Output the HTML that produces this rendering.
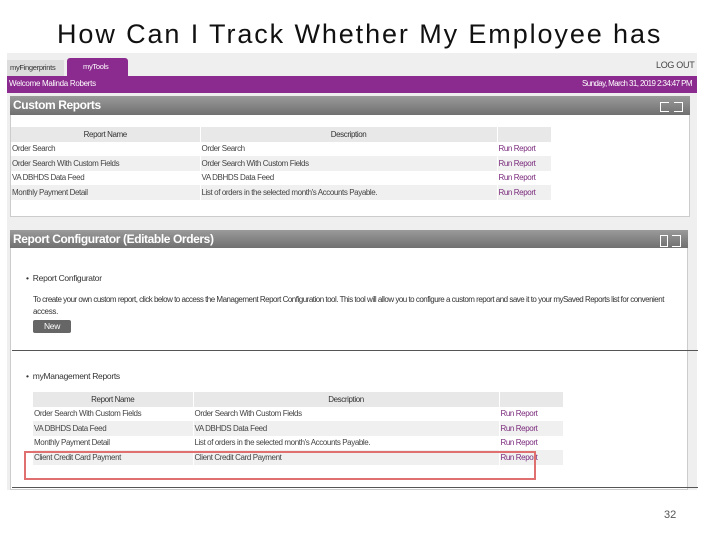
<!DOCTYPE html>
<html><head><style>
*{margin:0;padding:0;box-sizing:border-box}
body{width:720px;height:540px;background:#fff;position:relative;overflow:hidden;font-family:"Liberation Sans",sans-serif}
.a{position:absolute}
.t{font-family:"Liberation Sans Narrow","Liberation Sans",sans-serif;font-size:8.5px;color:#333;white-space:nowrap;letter-spacing:-0.3px}
table{border-collapse:collapse;position:absolute}
td{font-family:"Liberation Sans",sans-serif;font-size:8px;color:#444;height:14.5px;padding:0 1px;white-space:nowrap;letter-spacing:-0.4px;border-right:1px solid #fff}
tr.h td{background:#e8e8e8;text-align:center;color:#333}
tr.g td{background:#f0f0f0}
td.r{color:#7a2a7c}
.hd{background:linear-gradient(#9a9a9a,#707070);color:#fff;font-weight:bold;font-size:12px;padding-left:3px;letter-spacing:-0.4px}
</style></head><body>
<div class="a" style="left:57px;top:19px;font-size:27px;color:#111;white-space:nowrap;font-family:'Liberation Sans',sans-serif;letter-spacing:1.9px">How Can I Track Whether My Employee has</div>
<div class="a" style="left:7px;top:53px;width:690px;height:437px;background:#efefef"></div>
<div class="a t" style="left:7px;top:60px;width:57px;height:16px;background:#ddd;font-size:7.5px;padding:3px 0 0 3px">myFingerprints</div>
<div class="a t" style="left:67px;top:58px;width:61px;height:18px;background:#8b2a8f;color:#fff;font-size:7.5px;padding:4px 0 0 16px;border-radius:3px 3px 0 0">myTools</div>
<div class="a t" style="left:656px;top:60px;font-size:9px;color:#444">LOG OUT</div>
<div class="a" style="left:7px;top:76px;width:690px;height:17px;background:#8b2a8f"></div>
<div class="a t" style="left:9px;top:79px;color:#fff;font-size:8px">Welcome Malinda Roberts</div>
<div class="a t" style="left:582px;top:79px;color:#fff;font-size:8px;letter-spacing:-0.6px">Sunday, March 31, 2019 2:34:47 PM</div>
<div class="a" style="left:10px;top:96px;width:680px;height:121px;background:#fff;border:1px solid #ccc"></div>
<div class="a hd" style="left:10px;top:96px;width:680px;height:19px;line-height:18px">Custom Reports</div>
<div class="a" style="left:660px;top:102px;width:9px;height:10px;border:1px solid #fff;border-right:none"></div>
<div class="a" style="left:674px;top:102px;width:9px;height:10px;border:1px solid #fff;border-left:none"></div>
<table style="left:11px;top:127px;width:541px">
<tr class="h"><td style="width:189px">Report Name</td><td style="width:297px">Description</td><td></td></tr>
<tr><td>Order Search</td><td>Order Search</td><td class="r">Run Report</td></tr>
<tr class="g"><td>Order Search With Custom Fields</td><td>Order Search With Custom Fields</td><td class="r">Run Report</td></tr>
<tr><td>VA DBHDS Data Feed</td><td>VA DBHDS Data Feed</td><td class="r">Run Report</td></tr>
<tr class="g"><td>Monthly Payment Detail</td><td>List of orders in the selected month's Accounts Payable.</td><td class="r">Run Report</td></tr>
</table>
<div class="a" style="left:10px;top:230px;width:678px;height:260px;background:#fff;border:1px solid #ccc"></div>
<div class="a hd" style="left:10px;top:230px;width:678px;height:18px;line-height:18px">Report Configurator (Editable Orders)</div>
<div class="a" style="left:660px;top:235px;width:8px;height:12px;border:1px solid #fff"></div>
<div class="a" style="left:672px;top:235px;width:9px;height:12px;border:1px solid #fff;border-left:none"></div>
<div class="a t" style="left:26px;top:273px">•&nbsp; Report Configurator</div>
<div class="a t" style="left:33px;top:295px;font-size:8px;letter-spacing:-0.5px">To create your own custom report, click below to access the Management Report Configuration tool. This tool will allow you to configure a custom report and save it to your mySaved Reports list for convenient</div>
<div class="a t" style="left:33px;top:307px;font-size:8px">access.</div>
<div class="a t" style="left:33px;top:320px;width:38px;height:13px;background:#666;color:#fff;text-align:center;line-height:13px;border-radius:2px">New</div>
<div class="a" style="left:12px;top:350px;width:686px;height:1px;background:#555"></div>
<div class="a t" style="left:26px;top:371px">•&nbsp; myManagement Reports</div>
<table style="left:33px;top:392px;width:531px">
<tr class="h"><td style="width:160px">Report Name</td><td style="width:306px">Description</td><td></td></tr>
<tr><td>Order Search With Custom Fields</td><td>Order Search With Custom Fields</td><td class="r">Run Report</td></tr>
<tr class="g"><td>VA DBHDS Data Feed</td><td>VA DBHDS Data Feed</td><td class="r">Run Report</td></tr>
<tr><td>Monthly Payment Detail</td><td>List of orders in the selected month's Accounts Payable.</td><td class="r">Run Report</td></tr>
<tr class="g"><td>Client Credit Card Payment</td><td>Client Credit Card Payment</td><td class="r">Run Report</td></tr>
</table>
<div class="a" style="left:24px;top:451px;width:512px;height:29px;border:2px solid #e07070"></div>
<div class="a" style="left:12px;top:487px;width:686px;height:1px;background:#555"></div>
<div class="a" style="left:664px;top:509px;font-size:11px;color:#555">32</div>
</body></html>
